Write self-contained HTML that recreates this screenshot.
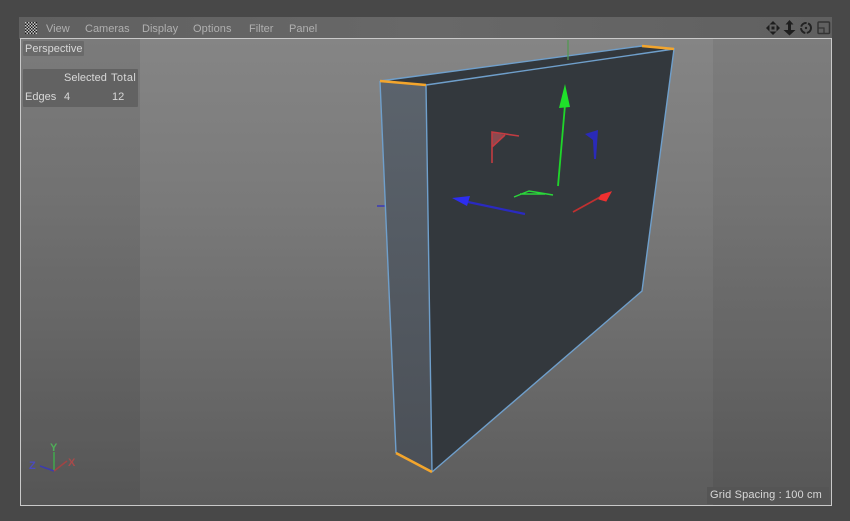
<!DOCTYPE html>
<html><head><meta charset="utf-8"><style>
html,body{margin:0;padding:0;width:850px;height:521px;overflow:hidden;background:#484848}
body{position:relative;font-family:"Liberation Sans",sans-serif;font-size:11px}
div{position:absolute;box-sizing:border-box}
.t{white-space:nowrap;line-height:13px;filter:blur(.25px)}
.m{color:#b0b0b0;top:23px}
.w{color:#d8d8d8}
</style></head><body>
<div style="left:19px;top:17px;width:813px;height:22px;background:linear-gradient(90deg,#606060,#686868 50%,#606060)"></div>
<div style="left:25px;top:22px;width:12px;height:12px;background:repeating-conic-gradient(#1a1a1a 0 25%,#c8c8c8 0 50%) 0 0/3px 3px"></div>
<div class="t m" style="left:46px">View</div>
<div class="t m" style="left:85px">Cameras</div>
<div class="t m" style="left:142px">Display</div>
<div class="t m" style="left:193px;letter-spacing:.1px">Options</div>
<div class="t m" style="left:249px">Filter</div>
<div class="t m" style="left:289px">Panel</div>

<svg style="position:absolute;left:764px;top:18px;filter:blur(.3px)" width="68" height="20" viewBox="764 18 68 20">
<g fill="#1e1e1e">
<path d="M773 21l3.500 3.500h-7zM773 35l3.500-3.500h-7zM766 28l3.500-3.500v7zM780 28l-3.500-3.500v7z"/><rect x="771.500" y="26.500" width="3" height="3"/>
<path d="M789.500 20l4 4.500h-2.500V30h4.500l-6 5.500-6-5.500h4.500v-5.500h-2.500z"/>
</g>
<circle cx="806" cy="28" r="5" fill="none" stroke="#222" stroke-width="2" stroke-dasharray="7 1.500"/><circle cx="806" cy="28" r="1.200" fill="#222"/>
<rect x="818" y="22" width="11.500" height="11.500" rx="1" fill="none" stroke="#333" stroke-width="1.500"/><path d="M818 28h6v5.500" fill="none" stroke="#333" stroke-width="1.200"/>
</svg>

<div style="left:20px;top:38px;width:812px;height:468px;border:1px solid #c9c9c9;background:linear-gradient(180deg,#858585 0,#7a7a7a 35%,#6a6a6a 70%,#5c5c5c 100%);overflow:hidden">
<div style="left:0;top:0;width:119px;height:466px;background:rgba(0,0,0,.07)"></div>
<div style="left:692px;top:0;width:118px;height:466px;background:rgba(0,0,0,.055)"></div>
</div>

<svg style="position:absolute;left:0;top:0;filter:blur(.35px)" width="850" height="521" viewBox="0 0 850 521">
<defs><linearGradient id="s" x1="0" y1="0" x2="0" y2="1"><stop offset="0" stop-color="#5b636c"/><stop offset="1" stop-color="#4b5057"/></linearGradient></defs>
<path d="M377 206h8" stroke="#3a3ab8" stroke-width="1.500"/>
<polygon points="380,81 426,85 432,472 396,453" fill="url(#s)"/>
<polygon points="426,85 674,49 642,291 432,472" fill="#33383d"/>
<polygon points="380,81 642,46 674,49 426,85" fill="#33383d"/>
<g stroke="#6f9fcb" stroke-width="1.400" fill="none">
<path d="M380 81L396 453M426 85L432 472M426 85L674 49L642 291L432 472M380 81L642 46"/>
</g>
<g stroke="#f3a52c" stroke-width="2.600" fill="none">
<path d="M380 81L426 85M642 46L674 49M396 453L432 472"/>
</g>
<path d="M568 40V60" stroke="#4f9a4f" stroke-width="1.200"/>
<path d="M558 186L565 105" stroke="#1fd62a" stroke-width="1.800"/>
<polygon points="565,84 570,107 559,108" fill="#1fe02a"/>
<path d="M525 214L468 202" stroke="#2a2ac0" stroke-width="2.200"/>
<polygon points="452,198 470,196 467,206" fill="#2d2df0"/>
<path d="M573 212L602 196" stroke="#c03030" stroke-width="1.800"/>
<path d="M611 192L606 201 599 199 601 195z" fill="#f03030" stroke="#f03030"/>
<polygon points="492,132 505,135 492,147" fill="#8a4a50"/>
<path d="M519 136L492 132L492 163M505 135L492 147" stroke="#c23c42" stroke-width="1.600" fill="none"/>
<polygon points="585,134 598,130 596,159 594,159 593,140" fill="#2a2ab8"/>
<path d="M514 197L529 191L553 195M520 194L545 194" stroke="#2ad63a" stroke-width="1.400" fill="none"/>
<path d="M54 471V452" stroke="#3fae4c" stroke-width="1.400"/>
<path d="M54 471L40 466" stroke="#3c3cae" stroke-width="1.600"/>
<path d="M54 471L67 461" stroke="#a04444" stroke-width="1.600"/>
</svg>

<div style="left:23px;top:41px;width:61px;height:15px;background:#6a6a6a;border-radius:1px"></div>
<div class="t w" style="left:25px;top:43px">Perspective</div>
<div style="left:23px;top:69px;width:115px;height:38px;background:#626262;border-radius:1px"></div>
<div class="t w" style="left:64px;top:72px">Selected</div>
<div class="t w" style="left:111px;top:72px;letter-spacing:.4px">Total</div>
<div class="t w" style="left:25px;top:91px">Edges</div>
<div class="t w" style="left:64px;top:91px">4</div>
<div class="t w" style="left:112px;top:91px">12</div>
<div style="left:707px;top:487px;width:122px;height:17px;background:#555"></div>
<div class="t w" style="left:710px;top:489px;letter-spacing:.15px">Grid Spacing : 100 cm</div>
<div class="t" style="left:50px;top:442px;color:#4fae58;font-weight:bold">Y</div>
<div class="t" style="left:29px;top:460px;color:#4a4ac0;font-weight:bold">Z</div>
<div class="t" style="left:68px;top:457px;color:#a84a4a;font-weight:bold">X</div>
</body></html>
